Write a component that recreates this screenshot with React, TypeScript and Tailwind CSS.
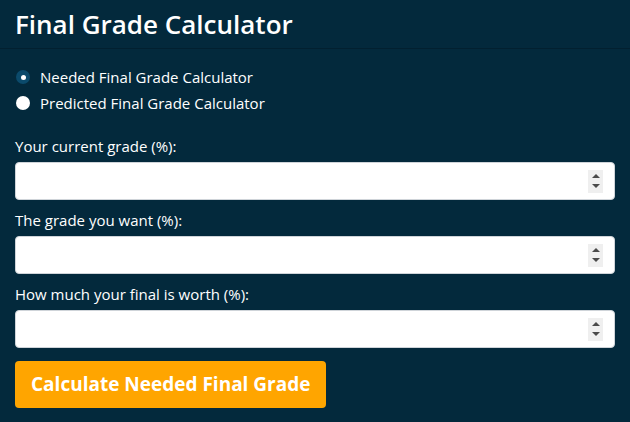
import React, { useState } from 'react'

const Spinner: React.FC = () => (
  <div className="flex flex-col items-center justify-center gap-[6px] w-[15px] h-[23px] bg-[#efefef]">
    <svg width="8" height="4" viewBox="0 0 8 4">
      <path d="M4 0 L8 4 L0 4 Z" fill="#4a4a4a" />
    </svg>
    <svg width="8" height="4" viewBox="0 0 8 4">
      <path d="M0 0 L8 0 L4 4 Z" fill="#4a4a4a" />
    </svg>
  </div>
)

const Field: React.FC<{ label: string }> = ({ label }) => (
  <div className="flex flex-col">
    <label className="text-[15px] leading-[20px] text-white mb-[6px]">{label}</label>
    <div className="flex items-center h-[38px] bg-white rounded-[4px] border border-[#cfd4d9] pr-[11px]">
      <input className="flex-1 h-full px-3 outline-none bg-transparent text-black" />
      <Spinner />
    </div>
  </div>
)

const Radio: React.FC<{ checked: boolean; label: string; onClick: () => void }> = ({ checked, label, onClick }) => (
  <div className="flex items-center gap-[10px] h-[26px] cursor-pointer" onClick={onClick}>
    <span
      className={
        checked
          ? 'w-[14px] h-[14px] rounded-full bg-[#0b4a6b] flex items-center justify-center'
          : 'w-[14px] h-[14px] rounded-full bg-white'
      }
    >
      {checked && <span className="w-[5px] h-[5px] rounded-full bg-white" />}
    </span>
    <span className="text-[15px] text-white">{label}</span>
  </div>
)

export default function App() {
  const [mode, setMode] = useState<'needed' | 'predicted'>('needed')

  return (
    <div className="w-[630px] h-[422px] bg-[#03293c] overflow-hidden font-['Segoe_UI','Open_Sans',sans-serif]">
      <div className="h-[49px] border-b border-[#022030] px-[15px] flex items-center">
        <h1 className="text-[26px] font-semibold text-white leading-none">Final Grade Calculator</h1>
      </div>
      <div className="px-[15px] pt-[15px]">
        <div className="flex flex-col pl-[1px]">
          <Radio checked={mode === 'needed'} label="Needed Final Grade Calculator" onClick={() => setMode('needed')} />
          <Radio checked={mode === 'predicted'} label="Predicted Final Grade Calculator" onClick={() => setMode('predicted')} />
        </div>
        <div className="flex flex-col gap-[10px] mt-[20px]">
          <Field label="Your current grade (%):" />
          <Field label="The grade you want (%):" />
          <Field label="How much your final is worth (%):" />
        </div>
        <button className="mt-[13px] h-[47px] px-[16px] rounded-[4px] bg-[#ffa500] text-white font-bold text-[19px]">
          Calculate Needed Final Grade
        </button>
      </div>
    </div>
  )
}
